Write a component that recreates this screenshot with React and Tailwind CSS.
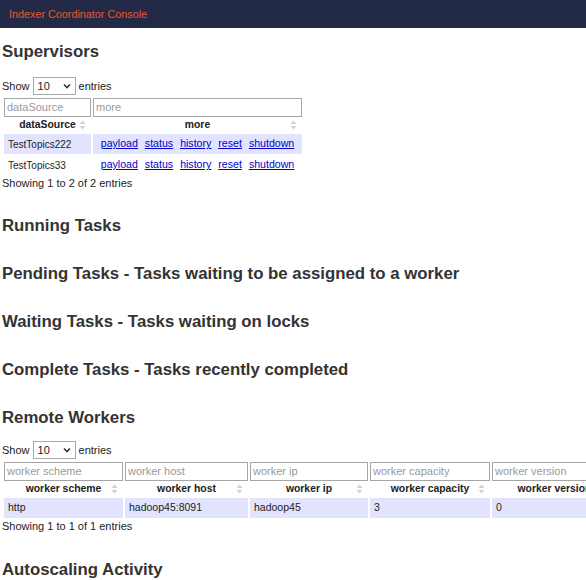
import React from 'react';

const font = { fontFamily: '"Liberation Sans", Arial, sans-serif' };

const SortIcon = () => (
  <svg width="7" height="10" viewBox="0 0 7 10" className="shrink-0">
    <polygon points="0.5,4 3.5,0.5 6.5,4" fill="#d2d2d2" />
    <polygon points="0.5,6 3.5,9.5 6.5,6" fill="#d2d2d2" />
  </svg>
);

const Heading = ({ children, className = '' }) => (
  <h2 className={`text-[16.8px] font-bold leading-[20px] text-[#333] whitespace-nowrap ${className}`}>
    {children}
  </h2>
);

const ShowEntries = ({ gap = 'mt-[15px]' }) => (
  <div className={`${gap} flex h-[18px] items-center text-[11px] text-[#222]`}>
    <span>Show</span>
    <div className="mx-[3px] flex h-[18px] w-[43px] items-center justify-between border border-[#a9a9a9] bg-white pl-[4px] pr-[4px]">
      <span>10</span>
      <svg width="8" height="6" viewBox="0 0 8 6">
        <polyline points="1,1.5 4,4.5 7,1.5" fill="none" stroke="#333" strokeWidth="1.6" />
      </svg>
    </div>
    <span>entries</span>
  </div>
);

const Links = () => (
  <div className="flex justify-center gap-[7px] text-[10.6px] text-[#0000cc] underline">
    {['payload', 'status', 'history', 'reset', 'shutdown'].map((l) => (
      <a key={l} href="#">{l}</a>
    ))}
  </div>
);

const DataTable = ({ cols, columns, rows }) => (
  <div className={`ml-[2px] mt-[3px] grid ${cols} gap-x-[2px] w-max`}>
    {columns.map((c) => (
      <div key={'f' + c.name} className="h-[19px] border border-[#a6a6a6] bg-white px-[2px] text-[11px] leading-[17px] text-[#999] whitespace-nowrap overflow-hidden">
        {c.name}
      </div>
    ))}
    {columns.map((c) => (
      <div key={'h' + c.name} className="flex h-[16px] items-center pl-[12px] pr-[5px] text-[10.4px] font-bold text-[#222]">
        <span className="flex-1 text-center whitespace-nowrap">{c.name}</span>
        <SortIcon />
      </div>
    ))}
    {rows.map((r, i) =>
      r.map((cell, j) => (
        <div
          key={i + '-' + j}
          className={`mt-[1px] flex h-[20px] items-center px-[4px] text-[#222] whitespace-nowrap ${columns[j].size} ${i % 2 === 0 ? 'bg-[#e2e4ff]' : 'bg-white'}`}
        >
          <div className="w-full">{cell}</div>
        </div>
      ))
    )}
  </div>
);

const Showing = ({ text }) => (
  <div className="mt-[1px] h-[14px] text-[11px] leading-[14px] text-[#222]">{text}</div>
);

export default function App() {
  const supervisorCols = [
    { name: 'dataSource', size: 'text-[10px]' },
    { name: 'more', size: 'text-[10.6px]' },
  ];
  const supervisorRows = [
    ['TestTopics222', <Links />],
    ['TestTopics33', <Links />],
  ];
  const workerCols = [
    { name: 'worker scheme', size: 'text-[10.5px]' },
    { name: 'worker host', size: 'text-[10.5px]' },
    { name: 'worker ip', size: 'text-[10.5px]' },
    { name: 'worker capacity', size: 'text-[10.5px]' },
    { name: 'worker version', size: 'text-[10.5px]' },
  ];
  const workerRows = [['http', 'hadoop45:8091', 'hadoop45', '3', '0']];

  return (
    <div className="min-h-screen w-full overflow-hidden bg-white" style={font}>
      <div className="flex h-[28px] items-center bg-[#232a48] px-[9px] text-[10.8px] text-[#e8582a]">
        Indexer Coordinator Console
      </div>

      <div className="px-[2px] pb-[20px]">
        <Heading className="mt-[14px]">Supervisors</Heading>
        <ShowEntries />
        <DataTable cols="grid-cols-[87px_209px]" columns={supervisorCols} rows={supervisorRows} />
        <Showing text="Showing 1 to 2 of 2 entries" />

        <Heading className="mt-[26px]">Running Tasks</Heading>
        <Heading className="mt-[28px]">Pending Tasks - Tasks waiting to be assigned to a worker</Heading>
        <Heading className="mt-[28px]">Waiting Tasks - Tasks waiting on locks</Heading>
        <Heading className="mt-[28px]">Complete Tasks - Tasks recently completed</Heading>
        <Heading className="mt-[28px]">Remote Workers</Heading>
        <ShowEntries gap="mt-[13px]" />
        <DataTable
          cols="grid-cols-[119px_123px_118px_120px_125px]"
          columns={workerCols}
          rows={workerRows}
        />
        <Showing text="Showing 1 to 1 of 1 entries" />

        <Heading className="mt-[27px]">Autoscaling Activity</Heading>
      </div>
    </div>
  );
}
